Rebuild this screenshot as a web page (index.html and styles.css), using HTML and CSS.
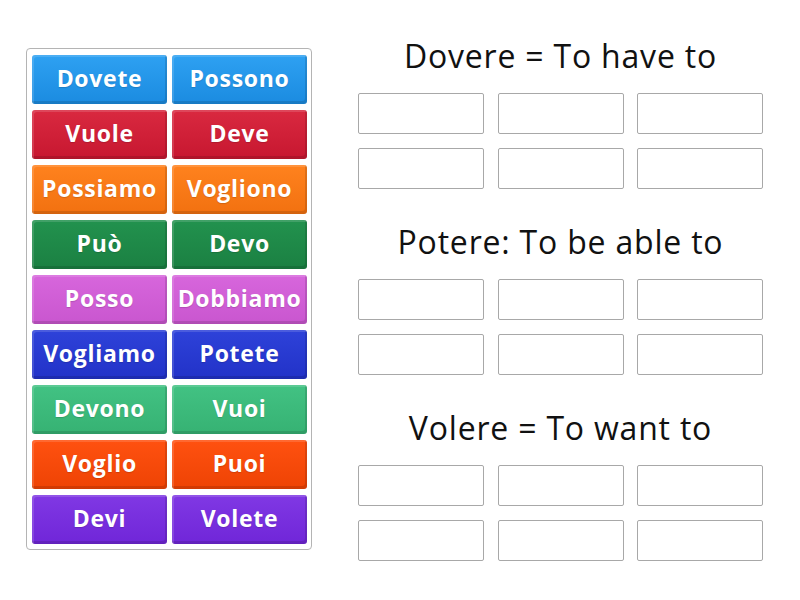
FILE: index.html
```html
<!DOCTYPE html>
<html>
<head>
<meta charset="utf-8">
<link rel="stylesheet" href="styles.css">
</head>
<body>
<div class="page">
  <div class="bank">
    <div class="tile blue">Dovete</div>
    <div class="tile blue">Possono</div>
    <div class="tile red">Vuole</div>
    <div class="tile red">Deve</div>
    <div class="tile orange">Possiamo</div>
    <div class="tile orange">Vogliono</div>
    <div class="tile green">Può</div>
    <div class="tile green">Devo</div>
    <div class="tile pink">Posso</div>
    <div class="tile pink">Dobbiamo</div>
    <div class="tile indigo">Vogliamo</div>
    <div class="tile indigo">Potete</div>
    <div class="tile sea">Devono</div>
    <div class="tile sea">Vuoi</div>
    <div class="tile flame">Voglio</div>
    <div class="tile flame">Puoi</div>
    <div class="tile purple">Devi</div>
    <div class="tile purple">Volete</div>
  </div>
  <div class="groups">
    <div class="group">
      <div class="title">Dovere = To have to</div>
      <div class="slots">
        <div class="slot"></div><div class="slot"></div><div class="slot"></div>
        <div class="slot"></div><div class="slot"></div><div class="slot"></div>
      </div>
    </div>
    <div class="group">
      <div class="title">Potere: To be able to</div>
      <div class="slots">
        <div class="slot"></div><div class="slot"></div><div class="slot"></div>
        <div class="slot"></div><div class="slot"></div><div class="slot"></div>
      </div>
    </div>
    <div class="group">
      <div class="title">Volere = To want to</div>
      <div class="slots">
        <div class="slot"></div><div class="slot"></div><div class="slot"></div>
        <div class="slot"></div><div class="slot"></div><div class="slot"></div>
      </div>
    </div>
  </div>
</div>
</body>
</html>
```

FILE: styles.css
```css
html, body {
  margin: 0;
  padding: 0;
  background: #ffffff;
}
body {
  font-family: "Open Sans", "Noto Sans", sans-serif;
  width: 800px;
  height: 600px;
  overflow: hidden;
}
.page {
  display: flex;
  align-items: flex-start;
  padding: 48px 0 0 26px;
}
.bank {
  display: grid;
  grid-template-columns: 135px 135px;
  grid-auto-rows: 49px;
  column-gap: 5px;
  row-gap: 6px;
  padding: 6px 4px 5px 5px;
  border: 1px solid #b4b4b4;
  border-radius: 4px;
}
.tile {
  display: flex;
  align-items: center;
  justify-content: center;
  padding-bottom: 4px;
  box-sizing: border-box;
  border-radius: 3px;
  color: #ffffff;
  font-weight: 700;
  font-size: 23px;
  letter-spacing: 0.7px;
  text-shadow: 0 1px 1px rgba(0,0,0,0.15);
  box-shadow: inset 2px 2px 0 rgba(255,255,255,0.14), inset -2px -3px 0 rgba(0,0,0,0.12);
}
.blue { background: linear-gradient(#2ea1f2, #1b8be0); }
.red { background: linear-gradient(#d92940, #c71730); }
.orange { background: linear-gradient(#ff821e, #f27110); }
.green { background: linear-gradient(#22924e, #1b8042); }
.pink { background: linear-gradient(#d766dc, #c956cf); }
.indigo { background: linear-gradient(#2e42d9, #2232c8); }
.sea { background: linear-gradient(#42c283, #36b273); }
.flame { background: linear-gradient(#ff5110, #ee4304); }
.purple { background: linear-gradient(#8038e4, #7026d8); }

.groups {
  margin-left: 46px;
  margin-top: -14px;
  width: 405px;
  display: flex;
  flex-direction: column;
  gap: 31px;
}
.title {
  text-align: center;
  font-size: 32px;
  line-height: 44px;
  letter-spacing: 0.8px;
  color: #111111;
  margin-bottom: 15px;
}
.slots {
  display: grid;
  grid-template-columns: 126px 126px 126px;
  grid-auto-rows: 41px;
  column-gap: 13.5px;
  row-gap: 14px;
}
.slot {
  border: 1px solid #a8a8a8;
  border-radius: 2px;
  box-sizing: border-box;
}
```
